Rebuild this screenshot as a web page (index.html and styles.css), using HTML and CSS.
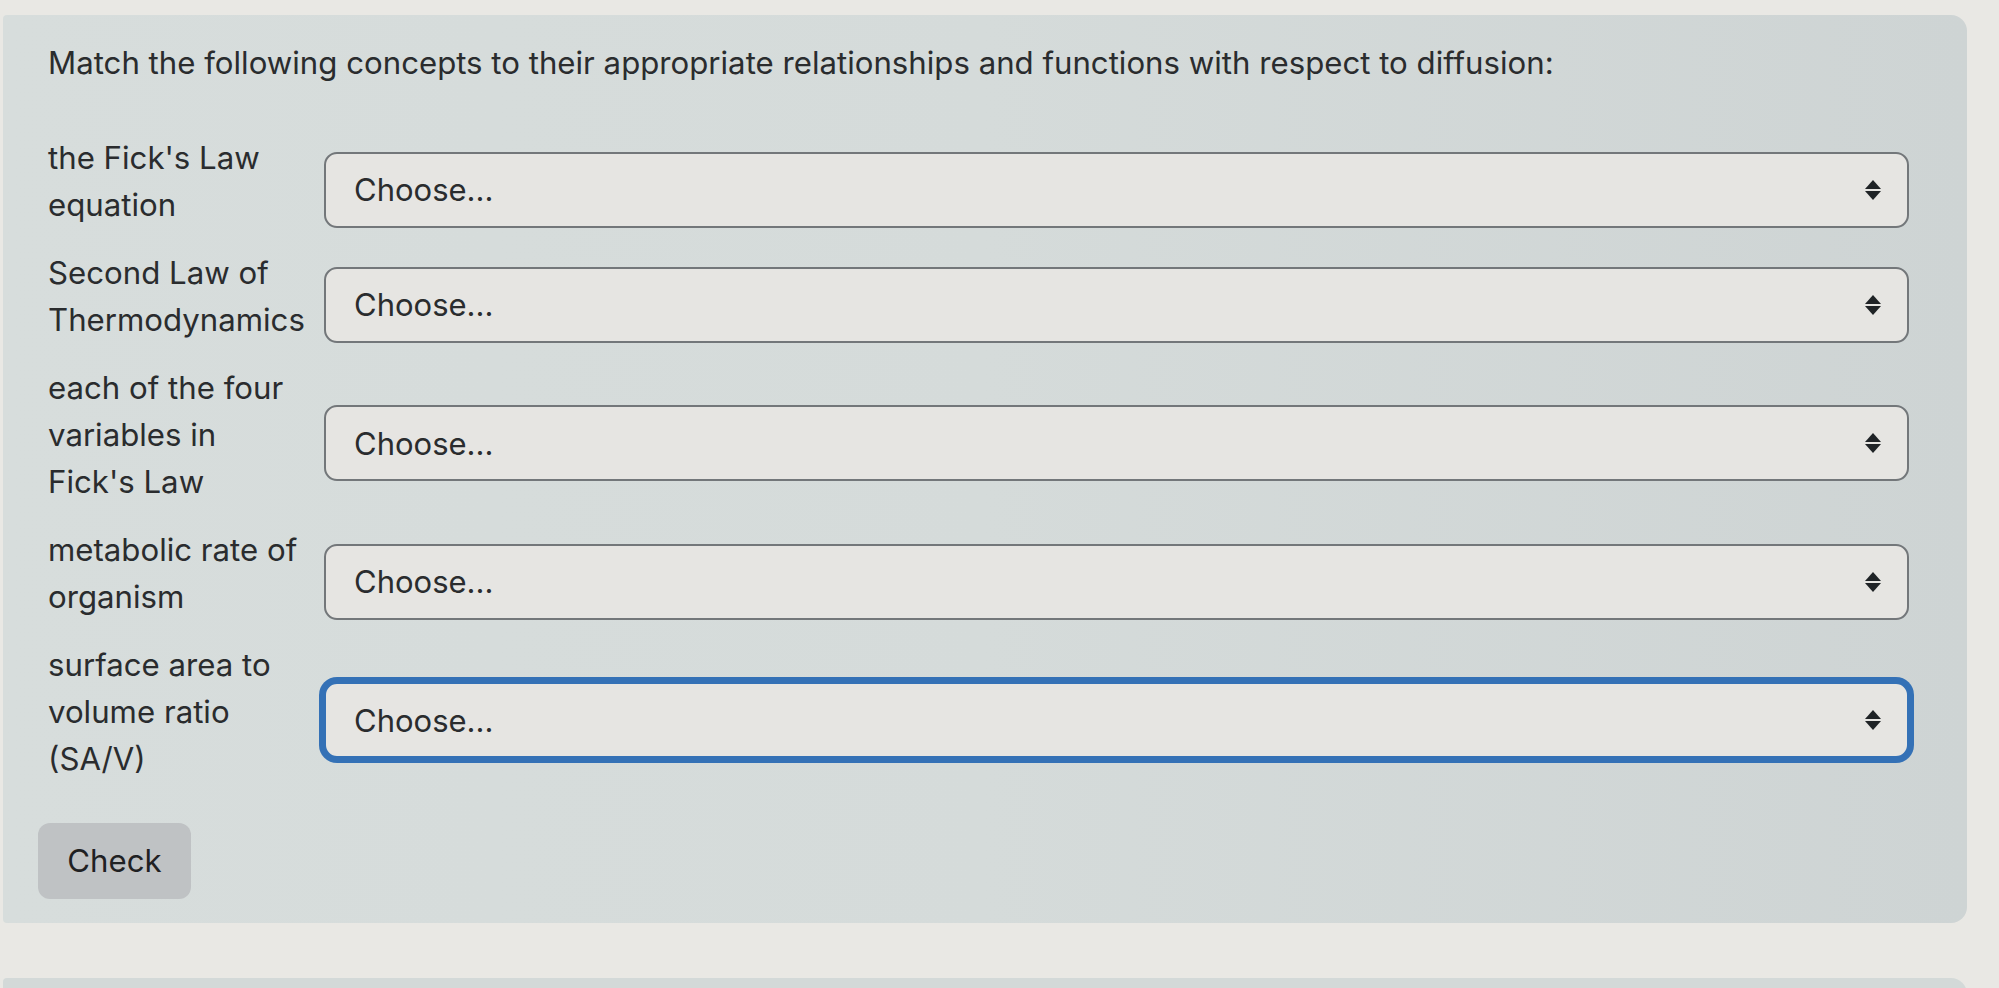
FILE: index.html
```html
<!DOCTYPE html>
<html lang="en">
<head>
<meta charset="utf-8">
<title>Match question</title>
<link rel="stylesheet" href="styles.css">
</head>
<body>
<div class="page">
  <div class="card">
    <p class="prompt">Match the following concepts to their appropriate relationships and functions with respect to diffusion:</p>
    <div class="answers">
      <div class="row">
        <div class="label">the Fick's Law equation</div>
        <div class="control">
          <select class="select"><option>Choose...</option></select>
          <svg class="arrows" width="16" height="20" viewBox="0 0 16 20"><polygon points="8,0 16,9 0,9"/><polygon points="0,11 16,11 8,20"/></svg>
        </div>
      </div>
      <div class="row">
        <div class="label">Second Law of Thermodynamics</div>
        <div class="control">
          <select class="select"><option>Choose...</option></select>
          <svg class="arrows" width="16" height="20" viewBox="0 0 16 20"><polygon points="8,0 16,9 0,9"/><polygon points="0,11 16,11 8,20"/></svg>
        </div>
      </div>
      <div class="row">
        <div class="label">each of the four variables in Fick's Law</div>
        <div class="control">
          <select class="select"><option>Choose...</option></select>
          <svg class="arrows" width="16" height="20" viewBox="0 0 16 20"><polygon points="8,0 16,9 0,9"/><polygon points="0,11 16,11 8,20"/></svg>
        </div>
      </div>
      <div class="row">
        <div class="label">metabolic rate of organism</div>
        <div class="control">
          <select class="select"><option>Choose...</option></select>
          <svg class="arrows" width="16" height="20" viewBox="0 0 16 20"><polygon points="8,0 16,9 0,9"/><polygon points="0,11 16,11 8,20"/></svg>
        </div>
      </div>
      <div class="row">
        <div class="label">surface area to volume ratio (SA/V)</div>
        <div class="control">
          <select class="select focused"><option>Choose...</option></select>
          <svg class="arrows" width="16" height="20" viewBox="0 0 16 20"><polygon points="8,0 16,9 0,9"/><polygon points="0,11 16,11 8,20"/></svg>
        </div>
      </div>
    </div>
    <button class="check" type="button">Check</button>
  </div>
  <div class="edge"></div>
</div>
</body>
</html>
```

FILE: styles.css
```css
html, body {
  margin: 0;
  padding: 0;
}

body {
  background: #e9e8e4;
  font-family: "Inter", "Liberation Sans", sans-serif;
  color: #2a2c2e;
  height: 988px;
  overflow: hidden;
}

.page {
  padding-top: 15px;
}

.card {
  margin: 0 32px 0 3px;
  padding: 25px 58px 24px 45px;
  background: linear-gradient(90deg, #d7dddc 0%, #d5dbda 50%, #ced4d4 100%);
  border-radius: 4px 16px 16px 4px;
}

.prompt {
  margin: 0;
  font-size: 31.2px;
  line-height: 47px;
}

.answers {
  margin-top: 48px;
  display: flex;
  flex-direction: column;
  gap: 21px;
}

.row {
  display: grid;
  grid-template-columns: 258px 1fr;
  column-gap: 18px;
  align-items: center;
}

.label {
  font-size: 31.2px;
  line-height: 47px;
}

.control {
  position: relative;
  margin-top: 15px;
}

.select {
  -webkit-appearance: none;
  appearance: none;
  display: block;
  width: 100%;
  height: 76px;
  margin: 0;
  padding: 0 60px 0 28px;
  background: #e6e5e2;
  border: 2px solid #73777a;
  border-radius: 13px;
  font-family: "Inter", "Liberation Sans", sans-serif;
  font-size: 31px;
  color: #2a2c2e;
}

.select.focused {
  border-color: #3471b6;
  box-shadow: 0 0 0 5px #3471b6;
}

.arrows {
  position: absolute;
  right: 28px;
  top: 50%;
  transform: translateY(-50%);
  fill: #1f2326;
}

.check {
  display: block;
  margin: 40px 0 0 -10px;
  width: 153px;
  height: 76px;
  padding: 0;
  background: #bfc2c4;
  border: none;
  border-radius: 12px;
  font-family: "Inter", "Liberation Sans", sans-serif;
  font-size: 31.2px;
  color: #1f2123;
}

.edge {
  margin: 55px 32px 0 3px;
  height: 20px;
  background: #d3d9d8;
  border-radius: 4px 16px 0 0;
}
```
